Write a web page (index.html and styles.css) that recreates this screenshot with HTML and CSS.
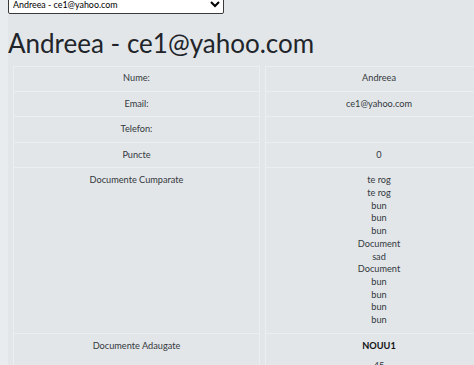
FILE: index.html
```html
<!DOCTYPE html>
<html lang="ro">
<head>
<meta charset="utf-8">
<title>Andreea - ce1@yahoo.com</title>
<link rel="stylesheet" href="styles.css">
</head>
<body>
<div class="page">
  <select class="user-select">
    <option>Andreea - ce1@yahoo.com</option>
  </select>
  <h1 class="title">Andreea - ce1@yahoo.com</h1>
  <table class="info">
    <tr><td>Nume:</td><td>Andreea</td></tr>
    <tr><td>Email:</td><td>ce1@yahoo.com</td></tr>
    <tr><td>Telefon:</td><td></td></tr>
    <tr><td>Puncte</td><td>0</td></tr>
    <tr>
      <td>Documente Cumparate</td>
      <td>
        <div>te rog</div>
        <div>te rog</div>
        <div>bun</div>
        <div>bun</div>
        <div>bun</div>
        <div>Document</div>
        <div>sad</div>
        <div>Document</div>
        <div>bun</div>
        <div>bun</div>
        <div>bun</div>
        <div>bun</div>
      </td>
    </tr>
    <tr>
      <td>Documente Adaugate</td>
      <td><div class="doc-name">NOUU1</div><div class="doc-val">45</div></td>
    </tr>
  </table>
</div>
</body>
</html>
```

FILE: styles.css
```css
html {
  background: #e9ecee;
  overflow: hidden;
}
body {
  margin: 0 0 0 8px;
  background: #e2e6e9;
  font-family: Lato, "Open Sans", sans-serif;
  color: #33383c;
  min-height: 365px;
}
.page {
  display: flex;
  flex-direction: column;
  align-items: flex-start;
}
.user-select {
  margin-top: -6px;
  width: 216px;
  height: 20px;
  font-family: Lato, sans-serif;
  font-size: 8.9px;
  color: #000;
  background: #fff;
  border: 1px solid #3a3a3a;
  border-radius: 2px;
  padding: 0;
}
.title {
  margin: 13px 0 6.5px;
  font-size: 26px;
  font-weight: 400;
  line-height: 32px;
  color: #212529;
}
.info {
  width: 490px;
  border-collapse: separate;
  border-spacing: 5px 0;
  font-size: 9.2px;
  line-height: 12.7px;
}
.info td {
  border: 1px solid #eceff1;
  border-bottom: 0;
  padding: 5.9px 8px;
  text-align: center;
  vertical-align: top;
}
.info td:first-child {
  width: 229px;
}
.doc-name {
  font-weight: 700;
  color: #111;
}
.doc-val {
  margin-top: 8px;
}
```
